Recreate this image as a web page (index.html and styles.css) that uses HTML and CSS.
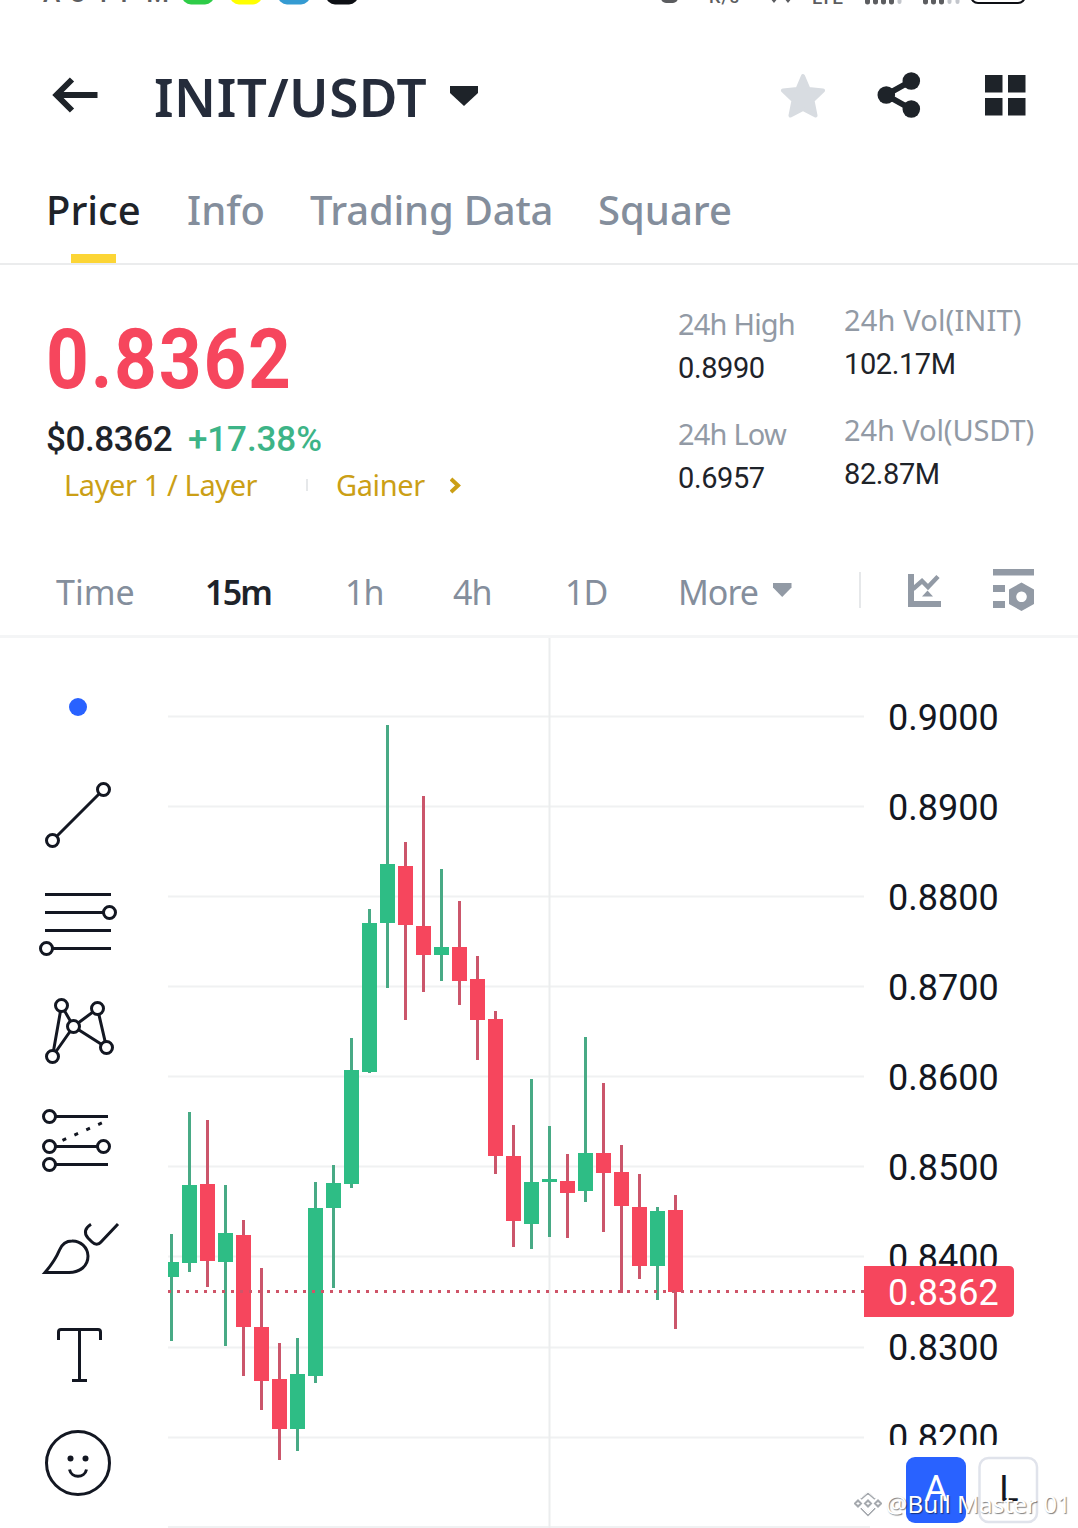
FILE: index.html
```html
<!DOCTYPE html>
<html lang="en">
<head>
    <meta charset="UTF-8">
    <meta name="viewport" content="width=device-width, initial-scale=1.0">
    <title>INIT/USDT</title>
    <link rel="stylesheet" href="styles.css">
</head>
<body>
    <div class="status-bar">
        <svg width="1078" height="6" viewBox="0 0 1078 6">
            <g fill="#5c5d60" font-family="Roboto" font-weight="500">
                <text x="43" y="2" font-size="26" textLength="126">AUTPM</text>
                <text x="709" y="3" font-size="18" textLength="30">K/s</text>
                <text x="812" y="4" font-size="19" textLength="31">LTE</text>
            </g>
            <rect x="182" y="-28" width="32" height="32.5" rx="9" fill="#2ecc48"/>
            <rect x="230" y="-28" width="32" height="32.5" rx="9" fill="#ffff00"/>
            <rect x="278" y="-28" width="32" height="32.5" rx="9" fill="#359bd2"/>
            <rect x="326" y="-28" width="32" height="32.5" rx="9" fill="#0d0f14"/>
            <rect x="661" y="-12" width="17" height="15" rx="5" fill="#5c5d60"/>
            <path d="M770 -2h8l-4 5zM784 -2h8l-4 5z" fill="#5c5d60"/>
            <path d="M867.500-4v6M875.500-4v6M883.500-4v6M891.500-4v6M925.500-4v6M933.500-4v6M941.500-4v6" stroke="#5c5d60" stroke-width="5" stroke-linecap="round"/>
            <path d="M899.500-4v6M949.500-4v6M957.500-4v6" stroke="#c3c6cc" stroke-width="4" stroke-linecap="round"/>
            <rect x="971" y="-20" width="54" height="23" rx="7" fill="none" stroke="#0d0f14" stroke-width="2"/>
        </svg>
    </div>

    <div class="header">
        <svg class="back" width="46" height="36" viewBox="0 0 46 36" fill="none" stroke="#1e2329" stroke-width="6">
            <path d="M4 18H45.500M20 2.500L4.500 18L20 33.500"/>
        </svg>
        <h1>INIT/USDT</h1>
        <svg class="caret" width="28" height="21" viewBox="0 0 28 21">
            <path d="M0 1h28v7L14 21L0 8z" fill="#1e2329"/>
        </svg>
        <svg class="star" width="46" height="46" viewBox="0 0 46 46">
            <path d="M23 4L28.500 17L43 18.500L32.500 28.500L35.500 43.500L23 37L10.500 43.500L13.500 28.500L3 18.500L17.500 17z" fill="#d8dce1" stroke="#d8dce1" stroke-width="4" stroke-linejoin="round"/>
        </svg>
        <svg class="share" width="44" height="46" viewBox="0 0 44 46" fill="#1e2329">
            <path d="M34 9L9 23L34 37" fill="none" stroke="#1e2329" stroke-width="6"/>
            <circle cx="34.300" cy="9" r="8.800"/>
            <circle cx="9.300" cy="23" r="8.800"/>
            <circle cx="34.300" cy="37" r="8.800"/>
        </svg>
        <svg class="grid-icon" width="41" height="41" viewBox="0 0 41 41" fill="#1e2329">
            <path d="M0 0h17.500v17.500H0zM23 0h17.500v17.500H23zM0 23h17.500v17.500H0zM23 23h17.500v17.500H23z"/>
        </svg>
    </div>

    <div class="tabs">
        <div class="tab active">Price</div>
        <div class="tab info">Info</div>
        <div class="tab trading">Trading Data</div>
        <div class="tab square">Square</div>
    </div>

    <div class="ticker">
        <div class="ticker-left">
            <div class="price">0.8362</div>
            <div class="fiat"><span class="usd">$0.8362</span><span class="change">+17.38%</span></div>
            <div class="tags">
                <span class="tag-layer">Layer 1 / Layer</span>
                <span class="sep"></span>
                <span class="tag-gainer">Gainer</span>
                <svg width="13" height="17" viewBox="0 0 13 17"><path d="M1 2L8 8.500L1 15" fill="none" stroke="#cb9f16" stroke-width="4"/></svg>
            </div>
        </div>
        <div class="stats">
            <div class="label high">24h High</div>
            <div class="value">0.8990</div>
            <div class="label low">24h Low</div>
            <div class="value">0.6957</div>
        </div>
        <div class="stats vol">
            <div class="label vol-init">24h Vol(INIT)</div>
            <div class="value">102.17M</div>
            <div class="label vol-usdt">24h Vol(USDT)</div>
            <div class="value">82.87M</div>
        </div>
    </div>

    <div class="intervals">
        <span class="time">Time</span>
        <span class="active">15m</span>
        <span>1h</span>
        <span>4h</span>
        <span>1D</span>
        <span class="more">More</span>
        <svg width="19" height="15" viewBox="0 0 19 15"><path d="M0 0h18.500v4.500L9.200 14L0 4.500z" fill="#929aa5"/></svg>
        <i class="bar"></i>
        <svg width="33" height="33" viewBox="0 0 33 33" fill="none" stroke="#929aa5">
            <path d="M3 0V30H33" stroke-width="6"/>
            <path d="M5 15L14 7L20 13L30 2.500" stroke-width="4.500"/>
            <path d="M14 22.500L19.500 16.500L25 22.500z" fill="#929aa5" stroke="none"/>
        </svg>
        <svg width="42" height="42" viewBox="0 0 42 42" fill="#929aa5">
            <path d="M0 0h41v6.500H0zM0 16h12v7H0zM0 32h12v7H0z"/>
            <path fill-rule="evenodd" d="M28.500 13.500L41 20.500V35L28.500 42L16 35V20.500zM28.500 22.500a5.300 5.300 0 1 0 .01 0z"/>
        </svg>
    </div>

    <div class="chart">
        <div class="tools">
            <svg viewBox="0 0 168 108"><circle class="dot" cx="78" cy="54" r="9"/></svg>
            <svg viewBox="0 0 168 108">
                <path d="M52.500 79.500L103.500 28.500"/>
                <circle cx="103.500" cy="28.500" r="6"/><circle cx="52.500" cy="79.500" r="6"/>
            </svg>
            <svg viewBox="0 0 168 108">
                <path d="M45 25.500H111M45 43.500H109M45 61.500H111M46 79.500H111"/>
                <circle cx="109.500" cy="43.500" r="6"/><circle cx="46.500" cy="79.500" r="6"/>
            </svg>
            <svg viewBox="0 0 168 108">
                <path d="M52.500 79.500L61.500 28.500L73.500 49.500L52.500 79.500M73.500 49.500L97.500 31.500L106.500 70.500L73.500 49.500"/>
                <circle cx="61.500" cy="28.500" r="6"/><circle cx="97.500" cy="31.500" r="6"/><circle cx="73.500" cy="49.500" r="6"/>
                <circle cx="52.500" cy="79.500" r="6"/><circle cx="106.500" cy="70.500" r="6"/>
            </svg>
            <svg viewBox="0 0 168 108">
                <path d="M49 31.500H108M49 61.500H103M49 79.500H108"/>
                <path d="M62.500 55.300L104 37" stroke-dasharray="4 9"/>
                <circle cx="49.500" cy="31.500" r="6"/><circle cx="49.500" cy="61.500" r="6"/>
                <circle cx="103.500" cy="61.500" r="6"/><circle cx="49.500" cy="79.500" r="6"/>
            </svg>
            <svg viewBox="0 0 168 108">
                <path d="M45 79.500C54 69 57 63 59.500 57C62 51 66 48 72 48A15.500 15.500 0 0 1 88 63C88 73 80 79.500 69 79.500Z"/>
                <path d="M91 31.300C85 35 83.500 40 88 45L92 49C95 52 98.500 52 101 49L118 31"/>
            </svg>
            <svg viewBox="0 0 168 108"><path d="M58.500 39V31Q58.500 28.500 61 28.500H98Q100.500 28.500 100.500 31V39M79.500 29V79.500M72 79.500H87"/></svg>
            <svg viewBox="0 0 168 108">
                <circle cx="78" cy="54" r="31.500"/>
                <circle class="eye" cx="70.500" cy="49.500" r="3"/><circle class="eye" cx="85.500" cy="49.500" r="3"/>
                <path d="M69.500 60.500C71.500 69.500 84.500 69.500 86.500 60.500"/>
            </svg>
        </div>

        <svg class="plot" width="696" height="890" viewBox="168 638 696 890">
            <g id="gridLines" stroke="#f0f1f2" stroke-width="2"></g>
            <path d="M549.500 638V1528" stroke="#ebedee" stroke-width="2"/>
            <g id="candles"></g>
            <path d="M168 1291.500H864" stroke="#cf5468" stroke-width="3" stroke-dasharray="3 6"/>
        </svg>

        <svg class="axis" width="214" height="890" viewBox="864 638 214 890">
            <g id="axisLabels"></g>
            <rect x="864" y="1445" width="214" height="83" fill="#fff"/>
            <path d="M864 1266H1009Q1014 1266 1014 1271V1312Q1014 1317 1009 1317H864z" fill="#f6465d"/>
            <text x="888" y="1305" class="last">0.8362</text>
            <rect x="906" y="1457" width="60" height="66" rx="9" fill="#2962ff"/>
            <text x="936" y="1501" text-anchor="middle" class="last">A</text>
            <rect x="979.500" y="1458" width="57.500" height="64" rx="9" fill="#fff" stroke="#e0e3eb" stroke-width="2.500"/>
            <text x="1009" y="1501" text-anchor="middle">L</text>
            <path d="M864 1527H870" stroke="#f0f1f2" stroke-width="2"/>
        </svg>

        <div class="watermark">
            <svg width="28" height="26" viewBox="0 0 28 26" fill="none" stroke-width="2">
                <path d="M7 8L14 2L21 8M7 17L14 24L21 17M1 12.500L4 9.500L7 12.500L4 15.500zM21 12.500L24 9.500L27 12.500L24 15.500zM11 12.500L14 9.500L17 12.500L14 15.500z" stroke="#a5a9ae"/>
                <path d="M7 7L14 1L21 7M7 16L14 23L21 16" stroke="#fff" stroke-width="1"/>
            </svg>
            <span>@Bull Master 01</span>
        </div>
    </div>

    <script src="script.js"></script>
</body>
</html>
```
FILE: styles.css
```css
* {
    box-sizing: border-box;
}
body {
    margin: 0;
    width: 1078px;
    height: 1528px;
    overflow: hidden;
    background: #fff;
    color: #1e2329;
    font-family: "Noto Sans", sans-serif;
}
svg {
    display: block;
    flex-shrink: 0;
}
.status-bar {
    height: 6px;
    overflow: hidden;
}
.header {
    display: flex;
    align-items: center;
    height: 178px;
    padding-left: 52px;
}
.header h1 {
    width: 296px;
    margin: 3px 0 0 56px;
    font-size: 53px;
    font-weight: 600;
    line-height: 60px;
    letter-spacing: 0.5px;
    color: #252c3b;
    white-space: nowrap;
}
.star {
    margin-left: 302px;
}
.share {
    margin-left: 51px;
}
.grid-icon {
    margin-left: 64px;
}

/* Tabs */
.tabs {
    display: flex;
    height: 81px;
    padding-left: 46px;
    border-bottom: 2px solid #ebeced;
}
.tab {
    width: 141px;
    padding-top: 1px;
    font-size: 40px;
    font-weight: 500;
    line-height: 49px;
    color: #848e9c;
    white-space: nowrap;
}
.tab.active {
    color: #1e2329;
}
.tab.active::after {
    content: "";
    display: block;
    width: 45px;
    height: 9px;
    margin: 20px 0 0 25px;
    background: #fcd535;
}
.tab.info {
    width: 123px;
}
.tab.trading {
    width: 288px;
    letter-spacing: -0.2px;
}

/* Price block */
.ticker {
    display: flex;
    height: 283px;
    padding: 45px 0 0 46px;
}
.ticker-left {
    width: 632px;
}
.price {
    font-family: Roboto, sans-serif;
    font-size: 83px;
    font-weight: 700;
    line-height: 100px;
    letter-spacing: 2px;
    color: #f6465d;
    transform: scaleX(0.9);
    transform-origin: left;
}
.fiat {
    display: flex;
    font-family: Roboto, sans-serif;
    font-size: 35px;
    font-weight: 500;
    line-height: 60px;
    letter-spacing: -0.4px;
}
.usd {
    width: 142px;
}
.change {
    color: #3db487;
    letter-spacing: -0.1px;
}
.tags {
    display: flex;
    align-items: center;
    margin-top: -2px;
    padding-left: 18px;
    font-size: 29px;
    line-height: 34px;
    letter-spacing: -0.4px;
    color: #cb9f16;
    white-space: nowrap;
}
.tag-layer {
    width: 242px;
}
.sep {
    width: 2px;
    height: 12px;
    margin-right: 28px;
    background: #e6e8ea;
}
.tag-gainer {
    width: 114px;
}
.stats {
    width: 166px;
    margin-top: -8px;
    line-height: 44px;
    white-space: nowrap;
}
.stats.vol {
    margin-top: -12px;
}
.label {
    font-size: 29px;
    color: #929aa5;
}
.label.high,
.label.low {
    letter-spacing: -0.8px;
}
.label.vol-init {
    letter-spacing: 0.15px;
}
.label.vol-usdt {
    letter-spacing: -0.1px;
}
.value {
    margin-bottom: 22px;
    font-family: Roboto, sans-serif;
    font-size: 29px;
    letter-spacing: -0.4px;
}

/* Interval row */
.intervals {
    display: grid;
    grid-template-columns: 149px 140px 108px 112px 113px 95px 86px 49px 85px 42px;
    align-items: center;
    height: 90px;
    padding-left: 56px;
    border-bottom: 3px solid #f4f5f6;
    font-size: 34px;
    line-height: 40px;
    letter-spacing: -1px;
    color: #848e9c;
}
.intervals .time {
    letter-spacing: 0;
}
.intervals .active {
    color: #1e2329;
    font-weight: 600;
    letter-spacing: -1.8px;
}
.intervals svg,
.bar {
    margin-bottom: 3px;
}
.bar {
    width: 2px;
    height: 36px;
    background: #e6e8ea;
}

/* Chart */
.chart {
    display: flex;
    position: relative;
    height: 890px;
}
.tools {
    width: 168px;
    padding-top: 15px;
}
.tools svg {
    width: 168px;
    height: 108px;
    fill: none;
    stroke: #131722;
    stroke-width: 3;
}
.tools circle {
    fill: #fff;
}
.tools .dot {
    fill: #2962ff;
    stroke: none;
}
.tools .eye {
    fill: #131722;
    stroke: none;
}
.axis text {
    font-family: Roboto, sans-serif;
    font-size: 36px;
    fill: #131722;
}
.axis .last {
    fill: #fff;
}
.watermark {
    position: absolute;
    right: 7px;
    bottom: 7px;
    display: flex;
    align-items: center;
    gap: 4px;
    color: #fff;
    font-size: 24.3px;
    line-height: 34px;
    text-shadow: 1px 1px 1px rgba(0, 0, 0, 0.5);
    white-space: nowrap;
}
```
FILE: script.js
```js
const NS = 'http://www.w3.org/2000/svg';
const UP = ['#2ebd85', '#48aa85'];
const DOWN = ['#f6465d', '#cb566b'];

// [direction, high, body top, body bottom, low]
const candles = [
    [1, 1234, 1262, 1277, 1341],
    [1, 1112, 1185, 1263, 1272],
    [0, 1120, 1184, 1261, 1287],
    [1, 1185, 1233, 1262, 1346],
    [0, 1220, 1235, 1327, 1376],
    [0, 1268, 1327, 1381, 1410],
    [0, 1343, 1379, 1429, 1460],
    [1, 1338, 1374, 1429, 1451],
    [1, 1182, 1208, 1376, 1383],
    [1, 1165, 1183, 1208, 1288],
    [1, 1038, 1070, 1184, 1188],
    [1, 909, 923, 1072, 1073],
    [1, 725, 864, 923, 988],
    [0, 842, 866, 925, 1020],
    [0, 796, 926, 955, 992],
    [1, 869, 947, 955, 981],
    [0, 901, 947, 981, 1005],
    [0, 956, 979, 1020, 1060],
    [0, 1011, 1019, 1156, 1174],
    [0, 1125, 1156, 1221, 1247],
    [1, 1079, 1182, 1224, 1249],
    [1, 1126, 1179, 1182, 1237],
    [0, 1154, 1181, 1193, 1238],
    [1, 1037, 1153, 1191, 1202],
    [0, 1083, 1153, 1173, 1232],
    [0, 1145, 1172, 1206, 1293],
    [0, 1174, 1207, 1266, 1279],
    [1, 1207, 1211, 1266, 1300],
    [0, 1195, 1210, 1292, 1329]
];

const levels = [
    ['0.9000', 716.5], ['0.8900', 806.5], ['0.8800', 896.5],
    ['0.8700', 986.5], ['0.8600', 1076.5], ['0.8500', 1166.5],
    ['0.8400', 1256.5], ['0.8300', 1347.5], ['0.8200', 1437.5]
];

function add(parent, tag, attrs) {
    const el = document.createElementNS(NS, tag);
    for (const key in attrs) el.setAttribute(key, attrs[key]);
    parent.appendChild(el);
    return el;
}

const grid = document.getElementById('gridLines');
const labels = document.getElementById('axisLabels');
levels.forEach(([text, y], i) => {
    add(grid, 'path', { d: `M168 ${y}H864` });
    add(labels, 'text', { x: 888, y: 729.5 + i * 90 }).textContent = text;
});
add(grid, 'path', { d: 'M168 1527H864' });

const group = document.getElementById('candles');
candles.forEach(([up, high, top, bottom, low], i) => {
    const x = 164 + i * 18;
    const [body, wick] = up ? UP : DOWN;
    add(group, 'rect', { x: x + 6, y: high, width: 3, height: low - high, fill: wick });
    add(group, 'rect', { x: x, y: top, width: 15, height: bottom - top, fill: body });
});
```
